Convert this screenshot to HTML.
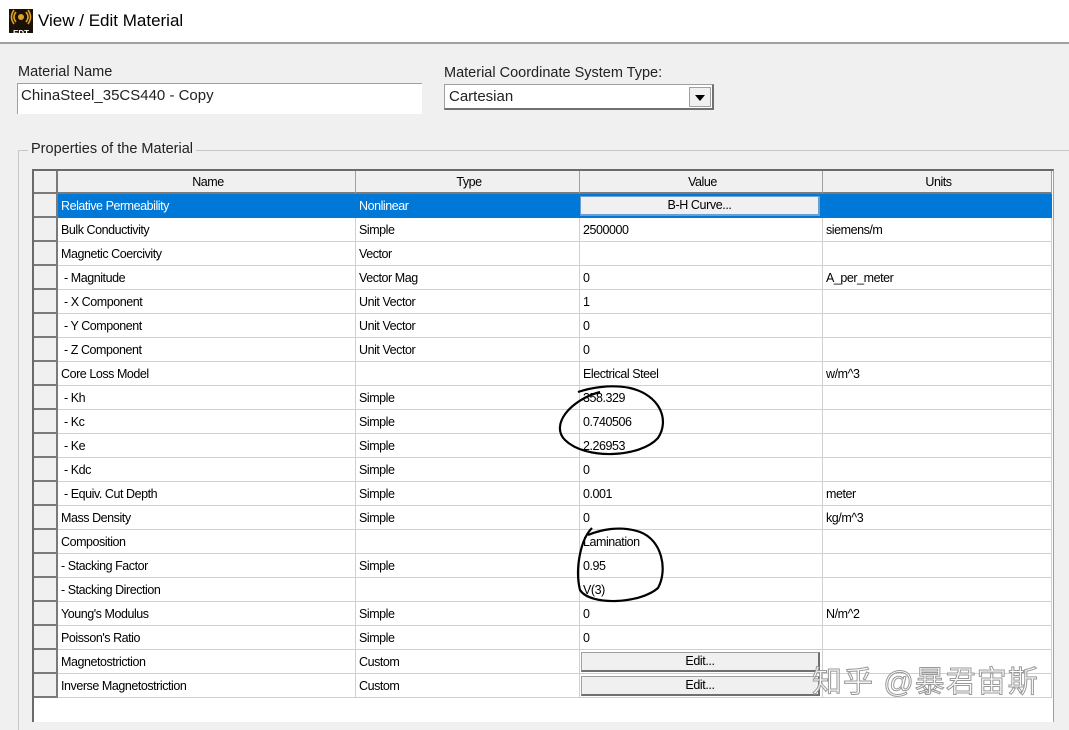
<!DOCTYPE html>
<html><head><meta charset="utf-8"><style>
*{margin:0;padding:0;box-sizing:border-box}
body{width:1069px;height:722px;overflow:hidden;background:#f0f0f0;font-family:"Liberation Sans",Arial,sans-serif;position:relative;color:#000}
.a{position:absolute}
.grid{position:absolute;left:32px;top:169px;width:1022px;height:553px;background:#fff;border-left:2px solid #6a6a6a;border-top:2px solid #6a6a6a;border-right:1px solid #a0a0a0}
.row{position:absolute;left:0;height:24px;display:flex;font-size:12.5px;letter-spacing:-0.45px}
.row div{height:24px;border-right:1px solid #d0d0d0;border-bottom:1px solid #d0d0d0;padding-left:3px;line-height:24px;white-space:nowrap;overflow:hidden}
.row div.h{background:#f0f0f0;border-right:2px solid #7a7a7a;border-bottom:2px solid #7a7a7a;padding:0}
.c1{width:298px}.c2{width:224px}.c3{width:243px}.c4{width:229px}
.hd div{background:#f0f0f0;text-align:center;border-right:1px solid #a0a0a0!important;border-bottom:2px solid #7a7a7a!important;height:23px!important;line-height:22px!important}
.hd div.h{border-right:2px solid #7a7a7a!important;width:24px}
.sel div:not(.h){background:#0078d7;color:#fff;border-color:#0078d7}
.btn{position:absolute;background:#f0f0f0;border:1px solid #a0a0a0;border-bottom:2px solid #707070;border-right:2px solid #707070;text-align:center;font-size:12.5px;letter-spacing:-0.4px;line-height:17px}
</style></head><body>
<div class="a" style="left:0;top:0;width:1069px;height:44px;background:#fff;border-bottom:2px solid #a0a0a0"></div>
<div class="a" style="left:9px;top:9px;width:24px;height:24px;background:#1a1208">
<svg width="24" height="16" viewBox="0 0 24 16"><circle cx="12" cy="8" r="3" fill="#e0a020"/><path d="M7 3 Q3 8 7 13 M17 3 Q21 8 17 13 M5 1 Q0 8 5 15 M19 1 Q24 8 19 15" stroke="#e0a020" stroke-width="1.6" fill="none"/></svg>
<div style="color:#fff;font-size:8px;font-weight:bold;text-align:center;line-height:8px">EDT</div></div>
<div class="a" style="left:38px;top:11px;font-size:17px">View / Edit Material</div>
<div class="a" style="left:18px;top:64px;font-size:14.5px;color:#222">Material Name</div>
<div class="a" style="left:17px;top:83px;width:405px;height:31px;background:#fff;border-top:1px solid #a0a0a0;border-left:1px solid #a0a0a0"></div>
<div class="a" style="left:21px;top:87px;font-size:15px;color:#222">ChinaSteel_35CS440 - Copy</div>
<div class="a" style="left:444px;top:65px;font-size:14.5px;color:#222">Material Coordinate System Type:</div>
<div class="a" style="left:444px;top:84px;width:270px;height:26px;background:#fff;border:1px solid #a0a0a0;border-right:2px solid #707070;border-bottom:2px solid #707070"></div>
<div class="a" style="left:449px;top:88px;font-size:15px;color:#222">Cartesian</div>
<div class="a" style="left:689px;top:87px;width:22px;height:20px;background:#f0f0f0;border:1px solid #a0a0a0"><div style="margin:7px auto 0;width:0;height:0;border-left:5px solid transparent;border-right:5px solid transparent;border-top:6px solid #000"></div></div>
<div class="a" style="left:18px;top:150px;width:1051px;height:580px;border-top:1px solid #c8c8c8;border-left:1px solid #c8c8c8"></div>
<div class="a" style="left:28px;top:141px;padding:0 3px;background:#f0f0f0;font-size:14.5px;color:#222">Properties of the Material</div>
<div class="grid">
<div class="row hd" style="top:0"><div class="h"></div><div class="c1">Name</div><div class="c2">Type</div><div class="c3">Value</div><div class="c4">Units</div></div>
<div class="row sel" style="top:23px"><div class="h" style="width:24px"></div><div class="c1">Relative Permeability</div><div class="c2">Nonlinear</div><div class="c3"></div><div class="c4"></div></div>
<div class="row" style="top:47px"><div class="h" style="width:24px"></div><div class="c1">Bulk Conductivity</div><div class="c2">Simple</div><div class="c3">2500000</div><div class="c4">siemens/m</div></div>
<div class="row" style="top:71px"><div class="h" style="width:24px"></div><div class="c1">Magnetic Coercivity</div><div class="c2">Vector</div><div class="c3"></div><div class="c4"></div></div>
<div class="row" style="top:95px"><div class="h" style="width:24px"></div><div class="c1">&nbsp;- Magnitude</div><div class="c2">Vector Mag</div><div class="c3">0</div><div class="c4">A_per_meter</div></div>
<div class="row" style="top:119px"><div class="h" style="width:24px"></div><div class="c1">&nbsp;- X Component</div><div class="c2">Unit Vector</div><div class="c3">1</div><div class="c4"></div></div>
<div class="row" style="top:143px"><div class="h" style="width:24px"></div><div class="c1">&nbsp;- Y Component</div><div class="c2">Unit Vector</div><div class="c3">0</div><div class="c4"></div></div>
<div class="row" style="top:167px"><div class="h" style="width:24px"></div><div class="c1">&nbsp;- Z Component</div><div class="c2">Unit Vector</div><div class="c3">0</div><div class="c4"></div></div>
<div class="row" style="top:191px"><div class="h" style="width:24px"></div><div class="c1">Core Loss Model</div><div class="c2"></div><div class="c3">Electrical Steel</div><div class="c4">w/m^3</div></div>
<div class="row" style="top:215px"><div class="h" style="width:24px"></div><div class="c1">&nbsp;- Kh</div><div class="c2">Simple</div><div class="c3">358.329</div><div class="c4"></div></div>
<div class="row" style="top:239px"><div class="h" style="width:24px"></div><div class="c1">&nbsp;- Kc</div><div class="c2">Simple</div><div class="c3">0.740506</div><div class="c4"></div></div>
<div class="row" style="top:263px"><div class="h" style="width:24px"></div><div class="c1">&nbsp;- Ke</div><div class="c2">Simple</div><div class="c3">2.26953</div><div class="c4"></div></div>
<div class="row" style="top:287px"><div class="h" style="width:24px"></div><div class="c1">&nbsp;- Kdc</div><div class="c2">Simple</div><div class="c3">0</div><div class="c4"></div></div>
<div class="row" style="top:311px"><div class="h" style="width:24px"></div><div class="c1">&nbsp;- Equiv. Cut Depth</div><div class="c2">Simple</div><div class="c3">0.001</div><div class="c4">meter</div></div>
<div class="row" style="top:335px"><div class="h" style="width:24px"></div><div class="c1">Mass Density</div><div class="c2">Simple</div><div class="c3">0</div><div class="c4">kg/m^3</div></div>
<div class="row" style="top:359px"><div class="h" style="width:24px"></div><div class="c1">Composition</div><div class="c2"></div><div class="c3">Lamination</div><div class="c4"></div></div>
<div class="row" style="top:383px"><div class="h" style="width:24px"></div><div class="c1">- Stacking Factor</div><div class="c2">Simple</div><div class="c3">0.95</div><div class="c4"></div></div>
<div class="row" style="top:407px"><div class="h" style="width:24px"></div><div class="c1">- Stacking Direction</div><div class="c2"></div><div class="c3">V(3)</div><div class="c4"></div></div>
<div class="row" style="top:431px"><div class="h" style="width:24px"></div><div class="c1">Young's Modulus</div><div class="c2">Simple</div><div class="c3">0</div><div class="c4">N/m^2</div></div>
<div class="row" style="top:455px"><div class="h" style="width:24px"></div><div class="c1">Poisson's Ratio</div><div class="c2">Simple</div><div class="c3">0</div><div class="c4"></div></div>
<div class="row" style="top:479px"><div class="h" style="width:24px"></div><div class="c1">Magnetostriction</div><div class="c2">Custom</div><div class="c3"></div><div class="c4"></div></div>
<div class="row" style="top:503px"><div class="h" style="width:24px"></div><div class="c1">Inverse Magnetostriction</div><div class="c2">Custom</div><div class="c3"></div><div class="c4"></div></div>
</div>
<div class="btn" style="left:580px;top:196px;width:240px;height:20px;border-color:#6a9fd0">B-H Curve...</div>
<div class="btn" style="left:581px;top:652px;width:239px;height:20px">Edit...</div>
<div class="btn" style="left:581px;top:676px;width:239px;height:20px">Edit...</div>
<div class="a" style="left:812px;top:657px;font-size:30px;color:rgba(255,255,255,0.8);-webkit-text-stroke:1px #999;font-family:'Liberation Sans','Noto Sans CJK SC',sans-serif;letter-spacing:1px">知乎 @暴君宙斯</div>
<svg class="a" style="left:0;top:0" width="1069" height="722">
<path d="M600 392 C570 400 550 425 565 440 C585 460 640 458 658 438 C670 420 660 395 630 388 C610 384 590 388 578 392" stroke="#000" stroke-width="2.2" fill="none"/>
<path d="M592 528 C580 540 575 570 580 590 C590 606 640 604 658 588 C668 570 662 540 640 532 C620 525 600 530 588 535" stroke="#000" stroke-width="2.2" fill="none"/>
</svg>
</body></html>
